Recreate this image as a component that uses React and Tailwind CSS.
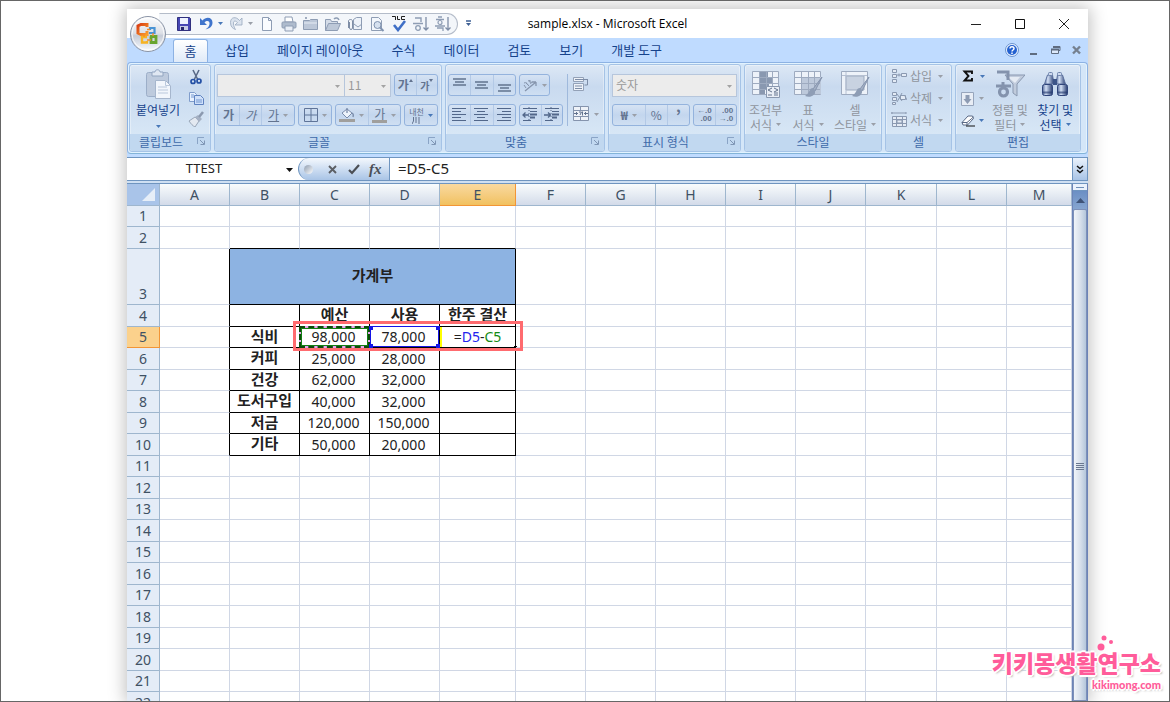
import clsx from "clsx";

const COLS = ["A", "B", "C", "D", "E", "F", "G", "H", "I", "J", "K", "L", "M"];
const ROWS = Array.from({ length: 22 }, (_, i) => i + 1);
const TABS = ["삽입", "페이지 레이아웃", "수식", "데이터", "검토", "보기", "개발 도구"];

const SHEET = {
  3: { B: "가계부" },
  4: { C: "예산", D: "사용", E: "한주 결산" },
  5: { B: "식비", C: "98,000", D: "78,000" },
  6: { B: "커피", C: "25,000", D: "28,000" },
  7: { B: "건강", C: "62,000", D: "32,000" },
  8: { B: "도서구입", C: "40,000", D: "32,000" },
  9: { B: "저금", C: "120,000", D: "150,000" },
  10: { B: "기타", C: "50,000", D: "20,000" },
};

function Icon({ w = 16, h = 16, children }) {
  return (
    <svg width={w} height={h} viewBox={`0 0 ${w} ${h}`} fill="none" className="shrink-0">
      {children}
    </svg>
  );
}

function Caret({ color = "#9a9fa8" }) {
  return (
    <Icon w={5} h={3}>
      <path d="M0 0h5L2.5 3z" fill={color} />
    </Icon>
  );
}

/* ---------- Title bar ---------- */

function OfficeButton() {
  return (
    <button aria-label="Office" className="absolute left-[2px] top-[6px] z-10">
      <Icon w={38} h={38}>
        <defs>
          <linearGradient id="orb" x1="0" y1="0" x2="0" y2="1">
            <stop offset="0" stopColor="#fdfdfe" />
            <stop offset=".48" stopColor="#dcdfe6" />
            <stop offset=".55" stopColor="#c6ccd8" />
            <stop offset="1" stopColor="#f8fbff" />
          </linearGradient>
          <linearGradient id="orange" x1="0" y1="0" x2="1" y2="1">
            <stop offset="0" stopColor="#d93d12" />
            <stop offset="1" stopColor="#fb9d2c" />
          </linearGradient>
        </defs>
        <circle cx="19" cy="19" r="17.5" fill="url(#orb)" stroke="#8a94a6" />
        <circle cx="19" cy="19" r="16" stroke="#fff" strokeOpacity=".8" />
        <path d="M18 12V9.5h-6L9 11v7l3 1.500h6V16" stroke="url(#orange)" strokeWidth="3" />
        <path d="M21 15v-2h4.500v5H21v-1" stroke="#4a93d4" strokeWidth="2.200" />
        <path d="M18 22h-5v5.500h5V26" stroke="#f6b323" strokeWidth="2.400" />
        <path d="M21 21.500h6v6h-5v-6" stroke="#69a52e" strokeWidth="2.800" />
        <path d="M18 14.500h3M15 19v3M24 18v3M18 25h4" stroke="#f28c28" strokeWidth="1.400" />
      </Icon>
    </button>
  );
}

const gray = "#8e9db4";

function QuickAccess() {
  return (
    <div className="ml-[32px] flex h-[22px] items-center gap-[6px] rounded-r-full border border-l-transparent border-[#b4bcc9] bg-[#f3f6fa] pl-[16px] pr-[6px]">
      <button aria-label="저장">
        <Icon>
          <path d="M1.5 1.5h12l1 1v12h-13z" fill="#4747b4" stroke="#30307f" />
          <path d="M4 2h8v6H4z" fill="#eef3ff" />
          <path d="M4 10h8v4H4z" fill="#c9cee6" />
          <path d="M5 11h3v3H5z" fill="#25256b" />
        </Icon>
      </button>
      <button aria-label="실행 취소" className="flex items-center gap-[4px]">
        <Icon>
          <path d="M2 2v7h7L6.500 6.500C9 4 12 5 11.500 8c-.3 2.500-2 4-4 5.500 4-1 7-3 7-7C14.500 1 8 0 4.500 4.500z" fill="#3f74cc" />
        </Icon>
        <Caret color="#4878b8" />
      </button>
      <button aria-label="다시 실행" className="flex items-center gap-[3px]">
        <Icon>
          <path d="M13 2v7H6l2.500-2.500C6 4 4 5 4.500 8c.3 2.500 1 4 2 5.500-3-1-5-3-5-7C1.500 1 7 0 10.500 4.500z" fill="#dbe3ee" stroke="#98a8be" strokeWidth=".8" />
        </Icon>
        <Caret />
      </button>
      <button aria-label="새로 만들기">
        <Icon>
          <path d="M3.5 1.5h6l3 3v10h-9z" fill="#fafcff" stroke={gray} />
          <path d="M9.5 1.5v3h3" stroke={gray} />
        </Icon>
      </button>
      <button aria-label="인쇄">
        <Icon>
          <path d="M4 1h7l1 5H4z" fill="#fff" stroke={gray} />
          <rect x="1" y="6" width="14" height="6" rx="1" fill="#aebbcd" stroke={gray} />
          <path d="M4 10h8v5H4z" fill="#e9eef6" stroke={gray} />
        </Icon>
      </button>
      <button aria-label="폴더">
        <Icon>
          <path d="M.5 4.5h6l1-1h7v10H.5z" fill="#bcc7d8" stroke={gray} />
          <path d="M1 7h13" stroke="#e6ecf5" />
          <path d="M2 1l2 2M4 1L2 3" stroke="#a0acbf" />
        </Icon>
      </button>
      <button aria-label="열기">
        <Icon>
          <path d="M.5 14.5v-11h5l1 2h6v2" fill="#d4dce8" stroke={gray} />
          <path d="M.5 14.5l3-7h12l-3 7z" fill="#bdc8d8" stroke={gray} />
          <path d="M9 3c2-2 4-1 5 1" stroke={gray} strokeWidth="1.5" />
        </Icon>
      </button>
      <button aria-label="전자 메일">
        <Icon>
          <path d="M6.5 3.5l3-2h5v12h-8z" fill="#edf2f9" stroke={gray} />
          <path d="M7 8l4 3 4-3" stroke={gray} />
          <path d="M1.5 12V5c0-2 4-2 4 0v7c0 2-3 2-3 0V6" stroke="#7e8da6" />
        </Icon>
      </button>
      <button aria-label="인쇄 미리 보기">
        <Icon>
          <path d="M2.5 1.5h7l3 3v10h-10z" fill="#f3f7fc" stroke={gray} />
          <circle cx="8.5" cy="9" r="3.5" fill="#d6e1ef" stroke="#8093b0" />
          <path d="M11 11.5l3.5 3.5" stroke="#8093b0" strokeWidth="2" />
        </Icon>
      </button>
      <button aria-label="맞춤법 검사">
        <Icon>
          <path d="M1 .5h3.5V4M6.5 0v3.5H9M14 .5h-3.5v3H14" stroke="#222" />
          <path d="M3 9l4 5 7-9" stroke="#3f6fc6" strokeWidth="2.6" />
        </Icon>
      </button>
      <button aria-label="오름차순 정렬">
        <Icon>
          <path d="M2 2h6v4M0 7.5h10" stroke={gray} strokeWidth="1.4" />
          <circle cx="5" cy="12" r="2.3" stroke={gray} strokeWidth="1.3" />
          <path d="M13 1v13M10.5 11.5L13 14l2.500-2.500" stroke="#7e8da6" strokeWidth="1.3" />
        </Icon>
      </button>
      <button aria-label="내림차순 정렬">
        <Icon>
          <path d="M3 1h4M1 3.5h8M0 10h10M2 12h6v3" stroke={gray} strokeWidth="1.3" />
          <circle cx="5" cy="6.5" r="2" stroke={gray} strokeWidth="1.2" />
          <path d="M13 1v13M10.5 11.5L13 14l2.500-2.500" stroke="#7e8da6" strokeWidth="1.3" />
        </Icon>
      </button>
    </div>
  );
}

function TitleBar() {
  return (
    <div className="relative flex h-[29px] items-center bg-white">
      <QuickAccess />
      <button aria-label="사용자 지정" className="ml-[7px]">
        <Icon w={7} h={7}>
          <path d="M1 1h5" stroke="#3d5f94" strokeWidth="1.5" />
          <path d="M1 3h5L3.5 6z" fill="#3d5f94" />
        </Icon>
      </button>
      <h1 className="absolute inset-x-0 text-center font-['Open_Sans','Noto_Sans',sans-serif] text-[12px] text-black">
        sample.xlsx - Microsoft Excel
      </h1>
      <div className="relative ml-auto flex gap-[32px] pr-[18px]">
        <button aria-label="최소화">
          <Icon w={12} h={12}>
            <path d="M1 6.5h10" stroke="#222" />
          </Icon>
        </button>
        <button aria-label="최대화">
          <Icon w={12} h={12}>
            <path d="M1.5 1.5h9v9h-9z" stroke="#111" />
          </Icon>
        </button>
        <button aria-label="닫기">
          <Icon w={12} h={12}>
            <path d="M1 1l10 10M11 1L1 11" stroke="#222" />
          </Icon>
        </button>
      </div>
    </div>
  );
}

function TabStrip() {
  return (
    <nav className="flex h-[24px] items-stretch bg-[#bfdbff] pl-[46px] text-[13px] text-[#15428b]">
      <a
        href="#home"
        className="mr-[17px] mt-px flex w-[35px] items-center justify-center rounded-t-[3px] border border-b-0 border-[#8db2e3] bg-gradient-to-b from-white to-[#dfeaf8]"
      >
        홈
      </a>
      <div className="flex items-center gap-[28px] pb-px">
        {TABS.map((t) => (
          <a key={t} href="#tab">
            {t}
          </a>
        ))}
      </div>
      <div className="ml-auto flex items-center gap-[10px] pr-[6px]">
        <button aria-label="도움말">
          <Icon w={14} h={14}>
            <circle cx="7" cy="7" r="6.5" fill="#eaf3ff" stroke="#6b93cf" />
            <circle cx="7" cy="7" r="5" fill="#2461d0" />
            <path d="M5 5.5c0-2.500 4-2.500 4 0C9 7 7 7 7 8.5M7 9.5V11" stroke="#fff" strokeWidth="1.5" />
          </Icon>
        </button>
        <button aria-label="통합 문서 최소화">
          <Icon w={11} h={11}>
            <path d="M1 9h7" stroke="#5f6c80" strokeWidth="2" />
          </Icon>
        </button>
        <button aria-label="통합 문서 복원">
          <Icon w={11} h={11}>
            <path d="M3 1.5h7v4H9" stroke="#5f6c80" />
            <path d="M1.5 4.5h7v4h-7z" fill="#dce9fb" stroke="#5f6c80" />
            <path d="M1 4.500h8M3 2h7" stroke="#5f6c80" strokeWidth="2" />
          </Icon>
        </button>
        <button aria-label="통합 문서 닫기">
          <Icon w={11} h={11}>
            <path d="M2 1.500l7 7M9 1.500l-7 7" stroke="#75808f" strokeWidth="2.4" />
          </Icon>
        </button>
      </div>
    </nav>
  );
}

/* ---------- Ribbon ---------- */

function Group({ label, launcher, className, children }) {
  return (
    <section
      className={clsx(
        "flex h-[88px] flex-col overflow-hidden rounded-[3px] border border-[#a5c3e6] bg-gradient-to-b from-[#dde8f5] via-[#c9daef] via-25% to-[#dcebf8] shadow-[inset_0_0_0_1px_rgba(255,255,255,.35)]",
        className
      )}
    >
      <div className="flex-1">{children}</div>
      <div className="relative flex h-[17px] items-center justify-center bg-[#c1d8f0] pb-[2px] text-[12px] text-[#3e6aaa]">
        <span className={clsx(launcher && "pr-[18px]")}>{label}</span>
        {launcher && (
          <button aria-label={`${label} 옵션`} className="absolute right-[5px] top-[3px]">
            <Icon w={8} h={8}>
              <path d="M.5 7V.5H7" stroke="#8aa4c6" />
              <path d="M3 3l4 4M7.5 3.5v4h-4" stroke="#7f96b5" />
            </Icon>
          </button>
        )}
      </div>
    </section>
  );
}

function Box({ className, children }) {
  return (
    <div
      className={clsx(
        "flex h-[22px] items-stretch rounded-[3px] border border-[#94b3dd] bg-gradient-to-b from-[#d6e3f3] via-[#c3d6ee] to-[#cfdff2] text-[12px] text-[#62738f]",
        className
      )}
    >
      {children}
    </div>
  );
}

function Btn({ label, className, children }) {
  return (
    <button
      aria-label={label}
      className={clsx("flex flex-1 items-center justify-center gap-[4px] border-[#b3c9e6] not-last:border-r", className)}
    >
      {children}
    </button>
  );
}

function Combo({ label, value, className }) {
  return (
    <label className={clsx("relative block h-[23px] border border-[#b6c6dc] bg-[#ececec]", className)}>
      <select
        aria-label={label}
        className="block h-full w-full appearance-none bg-transparent pb-[2px] pl-[3px] text-[12px] leading-[18px] text-[#999] outline-none"
      >
        <option>{value}</option>
      </select>
      <span className="pointer-events-none absolute right-[4px] top-[10px]">
        <Caret color="#a3a3a3" />
      </span>
    </label>
  );
}

function Lines({ rows }) {
  return (
    <Icon w={15} h={14}>
      {rows.map(([x, w], i) => (
        <path key={i} d={`M${x} ${i * 3 + 0.5}h${w}`} stroke="#52678a" strokeWidth="1.2" />
      ))}
    </Icon>
  );
}

function VLines({ y }) {
  return (
    <Icon w={15} h={16}>
      <path d={`M1 ${y}h13M3 ${y + 3}h9M1 ${y + 6}h13`} stroke="#62748f" strokeWidth="1.4" />
    </Icon>
  );
}

function Indent({ flip }) {
  return (
    <Icon>
      <path d="M1 1.5h14M8 4.5h7M1 13.5h8" stroke="#52678a" strokeWidth="1.2" />
      <path d="M8 7.5h7M8 10.5h5" stroke="#52678a" strokeWidth="2" />
      <path d={flip ? "M0 8h6M4 5.5L6.5 8 4 10.5" : "M7 8H1M3.5 5.5L1 8l2.5 2.5"} stroke="#52678a" strokeWidth="1.3" />
      <path d="M7 0v15" stroke="#52678a" strokeDasharray="1 2" />
    </Icon>
  );
}

function Clipboard() {
  return (
    <Group label="클립보드" launcher className="w-[82px]">
      <div className="flex justify-between pl-[6px] pr-[6px] pt-[4px]">
        <button className="flex flex-col items-center text-[12px] leading-[16px] text-[#15428b]">
          <Icon w={28} h={30}>
            <rect x="2.5" y="3.5" width="22" height="24" rx="2" fill="#bdcadd" stroke="#9caec8" />
            <path d="M8 3h3c0-3 5-3 5 0h3v4H8z" fill="#dfe7f2" stroke="#92a5c0" />
            <path d="M11.5 11.5h10l5 5v13h-15z" fill="#f2f6fc" stroke="#a6b6cd" />
            <path d="M21.5 11.5v5h5M14 18h9M14 21h10M14 24h10" stroke="#bac8dc" />
          </Icon>
          <span className="mt-[3px]">붙여넣기</span>
          <span className="flex h-[10px] items-end">
            <Caret color="#4878b8" />
          </span>
        </button>
        <div className="flex flex-col gap-[5px]">
          <button aria-label="잘라내기">
            <Icon>
              <path d="M5 1l5 10M11 1L6 11" stroke="#5b6b88" strokeWidth="1.6" />
              <circle cx="5" cy="12.5" r="2" stroke="#2450a5" strokeWidth="1.7" />
              <circle cx="11" cy="12" r="2" stroke="#2450a5" strokeWidth="1.7" />
            </Icon>
          </button>
          <button aria-label="복사">
            <Icon>
              <path d="M1.5 2.5h5l2 2v7h-7z" fill="#e8f1ff" stroke="#809dcc" />
              <path d="M6.5 5.5h6l3 3v6h-9z" fill="#cfe0fa" stroke="#5f82c0" />
              <path d="M8 10h6M8 12h6M3 5h3M3 7h3" stroke="#7397d1" />
            </Icon>
          </button>
          <button aria-label="서식 복사">
            <Icon>
              <path d="M1 10l6-4 4 4-4 6c-2-1-4-3-6-6z" fill="#e3e9f1" stroke="#99a6b8" />
              <path d="M7 6l3-2 4 4-3 3z" fill="#a5b1c4" />
              <path d="M11 6l4-5" stroke="#8b99af" strokeWidth="2.5" />
            </Icon>
          </button>
        </div>
      </div>
    </Group>
  );
}

function FontGroup() {
  return (
    <Group label="글꼴" launcher className="w-[228px]">
      <div className="flex flex-col gap-[7px] pl-[2px] pr-[3px] pt-[9px]">
        <div className="flex gap-[3px]">
          <div className="flex flex-1">
            <Combo label="글꼴 이름" value="" className="w-[128px]" />
            <Combo label="글꼴 크기" value="11" className="-ml-px flex-1" />
          </div>
          <Box className="w-[44px]">
            <Btn label="글꼴 크기 크게">
              <span className="flex items-start font-bold">
                가
                <svg width="4" height="3" className="mt-[3px]">
                  <path d="M0 3h4L2 0z" fill="#62738f" />
                </svg>
              </span>
            </Btn>
            <Btn label="글꼴 크기 작게">
              <span className="flex items-start text-[10px] font-bold">
                가
                <svg width="4" height="3" className="mt-px">
                  <path d="M0 0h4L2 3z" fill="#62738f" />
                </svg>
              </span>
            </Btn>
          </Box>
        </div>
        <div className="flex justify-between">
          <Box className="w-[78px]">
            <Btn className="font-bold">가</Btn>
            <Btn className="italic">가</Btn>
            <Btn className="grow-[1.5]">
              <u>가</u>
              <Caret />
            </Btn>
          </Box>
          <Box className="w-[34px]">
            <Btn label="테두리">
              <Icon w={14} h={14}>
                <path d="M.5.5h13v13H.5zM7 1v12M1 7h12" stroke="#5f7498" />
              </Icon>
              <Caret />
            </Btn>
          </Box>
          <Box className="w-[66px]">
            <Btn label="채우기 색">
              <Icon>
                <path d="M3 6l5-4 5 4-5 5z" fill="#edf3fb" stroke="#7a8cab" />
                <path d="M8 6V1M13 6c2 1 1 4 1 4" stroke="#7a8cab" strokeWidth="1.3" />
                <path d="M0 12h16v3H0z" fill="#a09f9d" />
              </Icon>
              <Caret />
            </Btn>
            <Btn label="글꼴 색">
              <span className="border-b-[3px] border-[#a09f9d] px-[2px] leading-[13px]">가</span>
              <Caret />
            </Btn>
          </Box>
          <Box className="w-[34px]">
            <Btn label="윗주 필드">
              <span className="flex flex-col items-center text-[8px] leading-[10px]">
                <span>내천</span>
                <Icon w={8} h={7}>
                  <path d="M1.500 0v4L0 7M4 0v6M7 0v7" stroke="#62738f" />
                </Icon>
              </span>
              <Caret color="#4878b8" />
            </Btn>
          </Box>
        </div>
      </div>
    </Group>
  );
}

function AlignGroup() {
  return (
    <Group label="맞춤" launcher className="w-[160px]">
      <div className="flex pl-[2px] pt-[9px]">
        <div className="flex flex-col gap-[8px]">
          <div className="flex gap-[3px]">
            <Box className="w-[68px]">
              <Btn label="위쪽 맞춤"><VLines y={2} /></Btn>
              <Btn label="가운데 맞춤"><VLines y={5} /></Btn>
              <Btn label="아래쪽 맞춤"><VLines y={8} /></Btn>
            </Box>
            <Box className="w-[31px]">
              <Btn label="방향">
                <Icon>
                  <path d="M3 14L14 5M14 5h-4M14 5v4" stroke="#8695ad" strokeWidth="1.3" />
                  <path d="M2 8l2 3M4 6l3 3M7 3l2 4M2 6c2-1 3 0 4 2M6 4c2-1 3 0 4 2" stroke="#8695ad" />
                </Icon>
                <Caret />
              </Btn>
            </Box>
          </div>
          <div className="flex gap-[3px]">
            <Box className="w-[68px]">
              <Btn label="왼쪽"><Lines rows={[[0, 14], [0, 9], [0, 14], [0, 9], [0, 14]]} /></Btn>
              <Btn label="가운데"><Lines rows={[[0, 14], [3, 8], [0, 14], [3, 8], [0, 14]]} /></Btn>
              <Btn label="오른쪽"><Lines rows={[[0, 14], [5, 9], [0, 14], [5, 9], [0, 14]]} /></Btn>
            </Box>
            <Box className="w-[44px]">
              <Btn label="내어쓰기"><Indent /></Btn>
              <Btn label="들여쓰기"><Indent flip /></Btn>
            </Box>
          </div>
        </div>
        <div className="ml-[4px] w-px bg-[#9fb9dc]" />
        <div className="ml-[5px] flex flex-col gap-[13px] pt-[3px]">
          <button aria-label="텍스트 줄 바꿈">
            <Icon>
              <path d="M.5.5h10v4H.5zM.5 6.5h10v7H.5z" fill="#eef2f8" stroke="#93a1b7" />
              <path d="M2 2.5h12M2 9h7M2 11.5h7M14.5 2v6h-3" stroke="#7d8da7" />
            </Icon>
          </button>
          <button aria-label="병합하고 가운데 맞춤" className="flex items-center gap-[5px]">
            <Icon>
              <path d="M.5.5h15v14H.5zM.5 4.5h15M.5 10.5h15M7.5.5v4M7.5 10.5v4" fill="#eef2f8" stroke="#8594ad" />
              <path d="M1 7.5h4M15 7.5h-4M3.5 6v3M12.5 6v3M6 6h2.500L7 9M9.5 5.5v4" stroke="#62738f" />
            </Icon>
            <Caret />
          </button>
        </div>
      </div>
    </Group>
  );
}

function NumberGroup() {
  return (
    <Group label="표시 형식" launcher className="w-[133px]">
      <div className="flex flex-col gap-[7px] px-[3px] pt-[9px]">
        <Combo label="표시 형식" value="숫자" />
        <div className="flex justify-between">
          <Box className="w-[78px]">
            <Btn label="통화" className="grow-[1.5] font-bold">
              ₩<Caret />
            </Btn>
            <Btn>%</Btn>
            <Btn label="쉼표 스타일" className="text-[16px] font-bold">’</Btn>
          </Box>
          <Box className="w-[44px]">
            <Btn label="자릿수 늘림" className="font-['Liberation_Sans',sans-serif] text-[8px] font-bold leading-[8px]">
              <span className="text-right">←.0<br />.00</span>
            </Btn>
            <Btn label="자릿수 줄임" className="font-['Liberation_Sans',sans-serif] text-[8px] font-bold leading-[8px]">
              <span className="text-right">.00<br />→.0</span>
            </Btn>
          </Box>
        </div>
      </div>
    </Group>
  );
}

function BigButton({ icon, lines, active, className }) {
  return (
    <button
      className={clsx(
        "flex flex-col items-center whitespace-nowrap text-[12px] leading-[15px]",
        active ? "text-[#15428b]" : "text-[#8f959e]",
        className
      )}
    >
      {icon}
      <span className="mt-[3px]">{lines[0]}</span>
      <span className="flex items-center gap-[4px]">
        {lines[1]}
        <Caret color={active ? "#4878b8" : "#9a9fa8"} />
      </span>
    </button>
  );
}

function GridIcon({ kind }) {
  return (
    <Icon w={30} h={30}>
      <path d="M1.5 2.5h26v23h-26z" fill="#edf2f9" stroke="#9eabc0" />
      {kind === "cond" && <path d="M9 3h8v6h4v5h-3v6h-4v5H9z" fill="#8998b0" />}
      {kind === "table" && <path d="M8 8h20v17H8z" fill="#bdc9db" />}
      {kind !== "cell" && <path d="M2 8.5h25M2 14.5h25M2 20.5h25M8.5 3v22M15.5 3v22M21.5 3v22" stroke="#9eabc0" />}
      {kind === "cell" && (
        <>
          <path d="M6 7h18v14H6z" fill="#c8d2e1" stroke="#9eabc0" />
          <path d="M2 6.5h25M6 3v22" stroke="#b5c0d2" />
        </>
      )}
      {kind === "cond" ? (
        <>
          <path d="M15.5 17.5h13v11h-13z" fill="#e9eef6" stroke="#8998b0" />
          <path d="M21 19l-4 2 4 2M23 19l4 2-4 2M17 26h4M23 24h4M23 26h4" stroke="#65758f" />
        </>
      ) : (
        <>
          <path d="M29 8l-9 12 2 2z" fill="#a5b1c5" stroke="#8493ad" />
          <path d="M20 19c-4 0-3 5-8 8 5 2 11 0 10-6z" fill="#8e9db5" />
        </>
      )}
    </Icon>
  );
}

function StyleGroup() {
  return (
    <Group label="스타일" className="w-[138px]">
      <div className="flex justify-between pl-[4px] pr-[5px] pt-[4px]">
        <BigButton icon={<GridIcon kind="cond" />} lines={["조건부", "서식"]} />
        <BigButton icon={<GridIcon kind="table" />} lines={["표", "서식"]} />
        <BigButton icon={<GridIcon kind="cell" />} lines={["셀", "스타일"]} />
      </div>
    </Group>
  );
}

function CellGroup() {
  const items = [
    ["삽입", "M1.5 1.5h4v3h-4zM1.5 6.5h4v3h-4zM1.5 11.5h4v3h-4zM10.5 5.5h5v3h-5zM6 7h4M8 5.5v3"],
    ["삭제", "M1.5 2.5h4v3h-4zM1.5 7.5h4v3h-4zM1.5 12.5h3v2h-3zM9.5 5.5h5v4h-5zM6 4l5 7M11 3L6 12M14 6l2 4"],
    ["서식", "M1.5 4.5h14v10h-14zM1 7.5h15M1 11.5h15M5.5 4v11M11.5 4v11M0 1h15M1 0v2M15 0v2M6 8h5v3H6z"],
  ];
  return (
    <Group label="셀" className="w-[67px]">
      <div className="flex flex-col gap-[3px] pl-[5px] pt-[2px]">
        {items.map(([label, d]) => (
          <button key={label} className="flex h-[19px] items-center gap-[3px] whitespace-nowrap pb-px text-[12px] text-[#8f959e]">
            <Icon>
              <path d={d} fill="#e4ebf5" stroke="#8a99b1" />
            </Icon>
            {label}
            <span className="ml-[3px] flex">
              <Caret />
            </span>
          </button>
        ))}
      </div>
    </Group>
  );
}

function EditGroup() {
  return (
    <Group label="편집" className="w-[126px]">
      <div className="flex pl-[5px] pr-[7px]">
        <div className="flex w-[26px] flex-col gap-[3px] pt-[2px]">
          <button aria-label="합계" className="flex h-[19px] items-center gap-[6px] pb-px pl-px">
            <Icon w={12} h={12}>
              <path d="M10 4V1.5H2.500L6.500 6l-4 4.500H10V8" stroke="#111" strokeWidth="1.9" />
            </Icon>
            <Caret color="#4878b8" />
          </button>
          <button aria-label="채우기" className="flex h-[19px] items-center gap-[4px]">
            <Icon w={14} h={16}>
              <path d="M.5 1.5h12v13H.5z" fill="#e8edf5" stroke="#97a5bc" />
              <path d="M4.5 4h4v4h2l-4 5-4-5h2z" fill="#8d9bb3" />
            </Icon>
            <Caret />
          </button>
          <button aria-label="지우기" className="flex h-[19px] items-center gap-[4px]">
            <Icon w={14} h={16}>
              <path d="M1 9.500l6-6.500h4.500l1 2.500L6.500 12H2z" fill="#fff" stroke="#5a6a86" />
              <path d="M1 9.5h5l6.500-5.500M6 9.5v2.500" stroke="#5a6a86" />
              <path d="M5 13h9" stroke="#111" strokeWidth="1.2" />
            </Icon>
            <Caret color="#4878b8" />
          </button>
        </div>
        <div className="flex flex-1 justify-between pl-[5px] pt-[4px]">
          <BigButton
            lines={["정렬 및", "필터"]}
            icon={
              <Icon w={30} h={30}>
                <path d="M10 6h20l-8 9v12l-4-3v-9z" fill="#c0cbdc" stroke="#8998b0" />
                <path d="M13 8h12l-5 6z" fill="#e5ebf4" />
                <path d="M2 3h11v8M1 17h15M8 13v4" stroke="#8493ad" strokeWidth="3" />
                <circle cx="8.5" cy="23" r="4" stroke="#8493ad" strokeWidth="3.2" />
              </Icon>
            }
          />
          <BigButton
            active
            lines={["찾기 및", "선택"]}
            icon={
              <Icon w={30} h={30}>
                <defs>
                  <linearGradient id="barrel" x1="0" y1="0" x2="1" y2="0">
                    <stop offset="0" stopColor="#54699a" />
                    <stop offset=".35" stopColor="#d3e0f5" />
                    <stop offset="1" stopColor="#263b70" />
                  </linearGradient>
                </defs>
                <path d="M7.500 6h5l1.500 9H4.500z" fill="url(#barrel)" stroke="#5c719d" />
                <path d="M17.500 6h5l3 9H16z" fill="url(#barrel)" stroke="#5c719d" />
                <path d="M13 10h4v6h-4z" fill="#3c5488" />
                <rect x="8.500" y="3.500" width="4" height="3" rx="1" fill="#cdd9ee" stroke="#6d82ab" />
                <rect x="17.500" y="3.500" width="4" height="3" rx="1" fill="#cdd9ee" stroke="#6d82ab" />
                <rect x="2.500" y="15.500" width="10" height="11" rx="2" fill="url(#barrel)" stroke="#2f447a" />
                <rect x="17.500" y="15.500" width="10" height="11" rx="2" fill="url(#barrel)" stroke="#2f447a" />
                <path d="M3 23.500h9M18 23.500h9" stroke="#20356b" strokeWidth="2" strokeOpacity=".6" />
              </Icon>
            }
          />
        </div>
      </div>
    </Group>
  );
}

function Ribbon() {
  return (
    <div className="bg-[#bfdbff] pb-[3px]">
      <div className="flex gap-[3px] rounded-[4px] border border-[#8db2e3] border-b-[#83b4d8] bg-[#d4e6f8] pb-px pl-px pt-px shadow-[inset_0_0_0_1px_#e2f3ff]">
        <Clipboard />
        <FontGroup />
        <AlignGroup />
        <NumberGroup />
        <StyleGroup />
        <CellGroup />
        <EditGroup />
      </div>
    </div>
  );
}

/* ---------- Formula bar ---------- */

function FormulaBar() {
  return (
    <div className="border-b border-[#6f95c0] bg-[#cfe0f3] pb-[2px]">
      <div className="flex h-[24px] border-y border-[#6f95c0] bg-white font-['Noto_Sans',sans-serif] text-[#222]">
        <div className="relative w-[171px]">
          <input
            aria-label="이름 상자"
            defaultValue="TTEST"
            className="block h-full w-full pb-[3px] pr-[17px] text-center text-[13px] leading-[18px] outline-none"
          />
          <span className="pointer-events-none absolute right-[5px] top-[10px]">
            <Icon w={7} h={4}>
              <path d="M0 0h7L3.5 4z" fill="#111" />
            </Icon>
          </span>
        </div>
        <div className="flex w-[92px] items-center gap-[8px] rounded-l-full border-l border-r border-[#6f95c0] bg-gradient-to-b from-[#f4f8fd] to-[#a9c4e6] pl-[5px]">
          <span className="mr-[6px] h-[9px] w-[9px] rounded-full bg-gradient-to-br from-[#8f9db0] to-white" />
          <button aria-label="취소">
            <Icon w={12} h={12}>
              <path d="M2 3l7 7M9 3l-7 7" stroke="#5c5f65" strokeWidth="1.9" />
            </Icon>
          </button>
          <button aria-label="입력">
            <Icon w={14} h={12}>
              <path d="M2 7l3 3L12 2" stroke="#4b4e54" strokeWidth="2.2" />
            </Icon>
          </button>
          <button className="font-['Liberation_Serif',serif] text-[15px] font-bold italic leading-[18px] text-[#4b4f57]">
            fx
          </button>
        </div>
        <input
          aria-label="수식"
          defaultValue="=D5-C5"
          className="block h-full min-w-0 flex-1 pb-[3px] pl-[8px] text-[15px] leading-[18px] outline-none"
        />
        <button
          aria-label="수식 입력줄 확장"
          className="flex w-[16px] items-center justify-center border-x border-[#6f95c0] bg-gradient-to-b from-[#eaf2fc] to-[#a9c4e6]"
        >
          <Icon w={8} h={9}>
            <path d="M1 1l3 2.500L7 1M1 5l3 2.500L7 5" stroke="#111" strokeWidth="1.5" />
          </Icon>
        </button>
      </div>
    </div>
  );
}

/* ---------- Sheet ---------- */

function cellClass(row, col) {
  const c = COLS.indexOf(col);
  const inTable = row >= 3 && row <= 10;
  return clsx(
    "relative overflow-visible border-b border-r p-0 text-center",
    inTable && c >= 0 && c <= 4 ? "border-r-black" : "border-r-[#d0d7e5]",
    row >= 2 && row <= 10 && c >= 1 && c <= 4 ? "border-b-black" : "border-b-[#d0d7e5]",
    row === 3 && col === "B" && "bg-[#8db3e2] pb-[4px]",
    row >= 4 && (row === 4 || col === "B") && "align-top leading-[18px]",
    row === 4 || col === "B" ? "text-[15px] font-bold" : "text-[14px]",
    row > 4 && (col === "C" || col === "D") && "pr-[2px]"
  );
}

function CellContent({ row, col }) {
  if (row === 5 && col === "C") {
    return (
      <>
        98,000
        <span className="absolute -inset-px border-2 border-[#e7a6ee]" />
        <span className="absolute -inset-px border-2 border-dashed border-[#0b4b0b]" />
        <span className="absolute inset-[1px] border border-[#128012]" />
      </>
    );
  }
  if (row === 5 && col === "D") {
    return (
      <>
        78,000
        <span className="absolute -top-px bottom-0 left-0 right-0 border border-[#1414e6]" />
        <span className="absolute -left-px -top-px h-[4px] w-[4px] bg-[#1414e6]" />
        <span className="absolute -right-px -top-px h-[4px] w-[4px] bg-[#1414e6]" />
        <span className="absolute -bottom-px -left-px h-[4px] w-[4px] bg-[#1414e6]" />
        <span className="absolute -bottom-px -right-px h-[4px] w-[4px] bg-[#1414e6]" />
      </>
    );
  }
  if (row === 5 && col === "E") {
    return (
      <>
        =<span className="text-[#2222ee]">D5</span>-<span className="text-[#138a13]">C5</span>
        <span className="absolute inset-y-0 left-0 w-[2px] bg-[#ffff00]" />
        <span className="absolute -bottom-[2px] -right-[2px] h-[3px] w-[3px] bg-black" />
        {/* highlight box over C5:E5 */}
        <span className="absolute -left-[147px] -top-[6px] z-10 h-[30px] w-[230px] border-[3px] border-[#ff6b6f]" />
      </>
    );
  }
  return SHEET[row]?.[col] ?? null;
}

function Sheet() {
  return (
    <table className="w-full table-fixed border-separate border-spacing-0 font-['Noto_Sans','Noto_Sans_CJK_KR',sans-serif] leading-[20px] text-[#222]">
      <colgroup>
        <col className="w-[33px]" />
        {COLS.map((c) => (
          <col key={c} className={c === "M" ? "" : c === "E" ? "w-[76px]" : c === "K" ? "w-[71px]" : "w-[70px]"} />
        ))}
      </colgroup>
      <thead>
        <tr className="h-[22px] text-[14px] text-[#3f5164]">
          <th className="border-b border-r border-[#9eb6ce] bg-[#a9c4e9] p-0">
            <span className="flex h-full items-end justify-end pr-[4px]">
              <Icon w={13} h={13}>
                <path d="M13 0v13H0z" fill="#e6eef8" />
              </Icon>
            </span>
          </th>
          {COLS.map((c) => (
            <th
              key={c}
              className={clsx(
                "border-b border-r p-0 font-normal",
                c === "E"
                  ? "border-[#f29536] bg-gradient-to-b from-[#f9d99f] to-[#f1c15f]"
                  : "border-[#9eb6ce] bg-gradient-to-b from-[#f9fcfd] to-[#d3dbe9]"
              )}
            >
              {c}
            </th>
          ))}
        </tr>
      </thead>
      <tbody>
        {ROWS.map((r) => (
          <tr key={r} className={r === 3 ? "h-[56px]" : r % 2 ? "h-[21px]" : "h-[22px]"}>
            <th
              className={clsx(
                "border-b border-r p-0 align-bottom text-[14px] font-normal text-[#3f5164]",
                r === 5 ? "border-[#f29536] bg-[#fbd18c]" : "border-[#9eb6ce] bg-[#e4ecf7]"
              )}
            >
              {r}
            </th>
            {COLS.filter((c) => r !== 3 || !"CDE".includes(c)).map((c) => (
              <td key={c} colSpan={r === 3 && c === "B" ? 4 : 1} className={cellClass(r, c)}>
                <CellContent row={r} col={c} />
              </td>
            ))}
          </tr>
        ))}
      </tbody>
    </table>
  );
}

function ScrollBar() {
  return (
    <div className="flex w-[16px] shrink-0 flex-col border-x border-[#6c84b8] bg-[#7f9fce]">
      <div className="flex h-[7px] items-center justify-center border-b border-[#6f95c0] bg-[#eaf2fc]">
        <span className="h-px w-[8px] bg-[#6f8fb8]" />
      </div>
      <button aria-label="위로 스크롤" className="flex h-[18px] items-center justify-center bg-gradient-to-b from-[#6b8fc4] to-[#86a5d0]">
        <Icon w={9} h={5}>
          <path d="M4.5 0L9 5H0z" fill="#3f5377" />
        </Icon>
      </button>
      <div className="flex flex-1 flex-col items-center rounded-t-[2px] border border-[#7d90b8] bg-gradient-to-r from-[#f0f4f9] via-[#d9e1ec] to-[#b4c6db] pt-[253px]">
        <Icon w={8} h={8}>
          <path d="M0 .5h8M0 2.5h8M0 4.5h8M0 6.5h8" stroke="#6a7890" />
        </Icon>
      </div>
    </div>
  );
}

function Watermark() {
  return (
    <div className="absolute bottom-[8px] right-[8px] z-20 text-right text-[#ff5c9a] [text-shadow:-2px_0_#fff,2px_0_#fff,0_-2px_#fff,0_2px_#fff,-1px_-1px_#fff,1px_1px_#fff,2px_2px_2px_#bbb]">
      <span className="absolute -top-[13px] right-[47px]">
        <Icon w={18} h={18}>
          <circle cx="8" cy="4" r="2.5" fill="#ff5c9a" />
          <circle cx="15" cy="8" r="2" fill="#ff5c9a" />
          <circle cx="5" cy="13" r="3.5" fill="#ff5c9a" />
        </Icon>
      </span>
      <p className="text-[23px] font-black leading-[30px]">키키몽생활연구소</p>
      <p className="font-['Lato',sans-serif] text-[11px] font-black leading-[16px]">kikimong.com</p>
    </div>
  );
}

export default function App() {
  return (
    <div className="relative flex h-screen flex-col overflow-hidden border border-[#666] bg-white font-['Noto_Sans_CJK_KR',sans-serif]">
      <div className="relative ml-[126px] mr-[81px] mt-[8px] flex min-h-0 flex-1 flex-col bg-white shadow-[0_0_16px_2px_rgba(0,0,0,.25)]">
        <OfficeButton />
        <TitleBar />
        <TabStrip />
        <Ribbon />
        <FormulaBar />
        <div className="flex min-h-0 flex-1">
          <div className="min-w-0 flex-1 overflow-hidden">
            <Sheet />
          </div>
          <ScrollBar />
        </div>
      </div>
      <Watermark />
    </div>
  );
}
